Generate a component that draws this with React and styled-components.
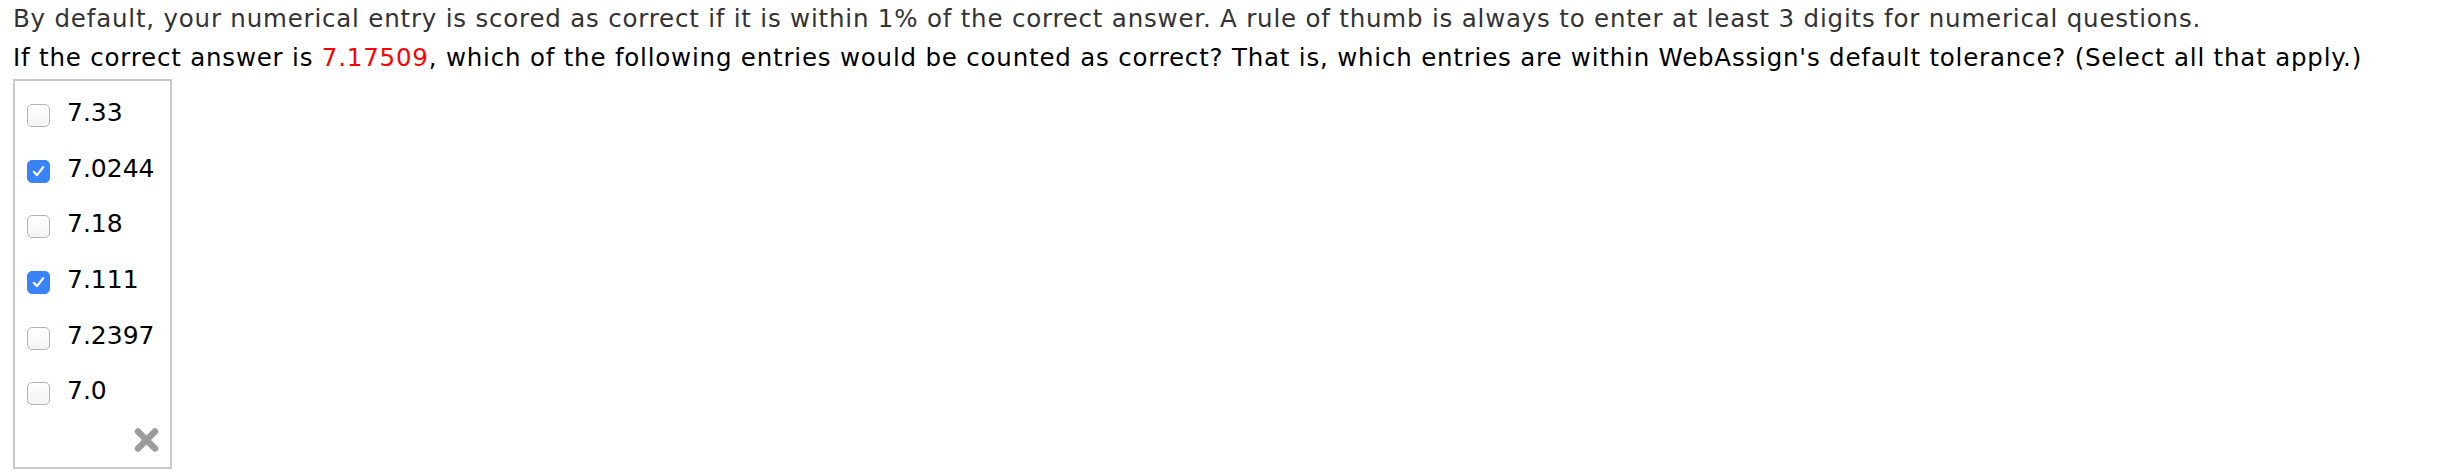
import React from "react";
import styled, { createGlobalStyle } from "styled-components";

const GlobalStyle = createGlobalStyle`
  html, body {
    margin: 0;
    padding: 0;
    background: #ffffff;
  }
  body {
    font-family: "DejaVu Sans", Verdana, sans-serif;
  }
`;

const options = [
  { value: "7.33", checked: false },
  { value: "7.0244", checked: true },
  { value: "7.18", checked: false },
  { value: "7.111", checked: true },
  { value: "7.2397", checked: false },
  { value: "7.0", checked: false },
];

export default function App() {
  return (
    <>
      <GlobalStyle />
      <Page>
        <Intro>
          By default, your numerical entry is scored as correct if it is within
          1% of the correct answer. A rule of thumb is always to enter at least 3
          digits for numerical questions.
        </Intro>
        <Question>
          If the correct answer is <Highlight>7.17509</Highlight>, which of the
          following entries would be counted as correct? That is, which entries
          are within WebAssign's default tolerance? (Select all that apply.)
        </Question>
        <AnswerBox>
          <OptionList>
            {options.map((opt) => (
              <OptionRow key={opt.value}>
                <CheckBox $checked={opt.checked}>
                  {opt.checked && (
                    <svg width="15" height="15" viewBox="0 0 15 15">
                      <path
                        d="M2.8 7.8 L6 11.2 L12.2 3.2"
                        fill="none"
                        stroke="#ffffff"
                        strokeWidth="2.2"
                        strokeLinecap="round"
                        strokeLinejoin="round"
                      />
                    </svg>
                  )}
                </CheckBox>
                <OptionLabel>{opt.value}</OptionLabel>
              </OptionRow>
            ))}
          </OptionList>
          <Footer>
            <svg width="27" height="28" viewBox="0 0 27 28">
              <path
                d="M5 5.5 L22 22.5 M22 5.5 L5 22.5"
                stroke="#9c9c9c"
                strokeWidth="6.5"
                strokeLinecap="round"
              />
            </svg>
          </Footer>
        </AnswerBox>
      </Page>
    </>
  );
}

const Page = styled.div`
  padding: 0 0 0 13px;
`;

const Intro = styled.p`
  margin: 0;
  font-size: 24.5px;
  letter-spacing: 0.8px;
  line-height: 37px;
  color: #333333;
  white-space: nowrap;
`;

const Question = styled.p`
  margin: 0;
  font-size: 24.5px;
  letter-spacing: 0.8px;
  line-height: 41px;
  color: #000000;
  white-space: nowrap;
`;

const Highlight = styled.span`
  color: #ff0000;
`;

const AnswerBox = styled.div`
  width: 143px;
  margin-top: 1px;
  border: 2px solid #c9c9c9;
  padding: 17px 0 13px 12px;
  box-sizing: content-box;
`;

const OptionList = styled.div`
  display: flex;
  flex-direction: column;
  gap: 25.7px;
`;

const OptionRow = styled.label`
  display: flex;
  align-items: flex-start;
  height: 30px;
`;

const CheckBox = styled.span`
  display: flex;
  align-items: center;
  justify-content: center;
  width: 23px;
  height: 23px;
  margin-top: 6px;
  box-sizing: border-box;
  border-radius: 5px;
  border: 1px solid ${(p) => (p.$checked ? "#3a82f7" : "#b3b3b3")};
  background: ${(p) =>
    p.$checked ? "#3a82f7" : "linear-gradient(#ffffff, #f4f4f4)"};
`;

const OptionLabel = styled.span`
  margin-left: 17px;
  font-size: 25px;
  line-height: 30px;
  color: #000000;
`;

const Footer = styled.div`
  display: flex;
  justify-content: flex-end;
  padding-right: 10px;
  margin-top: 20px;
  height: 28px;
`;
